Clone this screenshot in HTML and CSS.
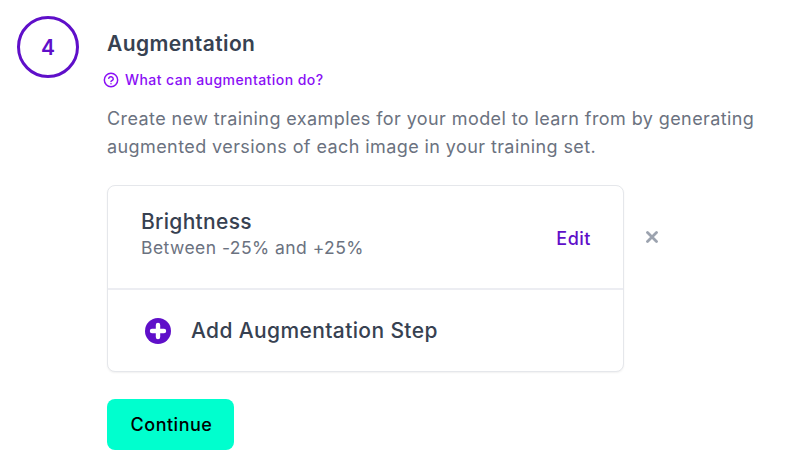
FILE: index.html
```html
<!DOCTYPE html>
<html lang="en">
<head>
<meta charset="utf-8">
<title>Augmentation</title>
<link rel="stylesheet" href="styles.css">
</head>
<body>
<div class="step">
  <div class="badge">4</div>
  <div class="content">
    <h2 class="title">Augmentation</h2>
    <a class="help">
      <svg class="help-icon" viewBox="0 0 24 24" fill="none" stroke="currentColor" stroke-width="2.2" stroke-linecap="round" stroke-linejoin="round"><circle cx="12" cy="12" r="10"/><path d="M8.6 9.4a3.5 3.5 0 0 1 6.8 1c0 2.2-3.4 2.6-3.4 4"/><path d="M12 17.6v.1"/></svg>
      <span>What can augmentation do?</span>
    </a>
    <p class="desc">Create new training examples for your model to learn from by generating augmented versions of each image in your training set.</p>
    <div class="card-row">
      <div class="card">
        <div class="row row-item">
          <div class="item-text">
            <div class="item-name">Brightness</div>
            <div class="item-sub">Between -25% and +25%</div>
          </div>
          <a class="edit">Edit</a>
        </div>
        <div class="row row-add">
          <svg class="plus" viewBox="0 0 26 26"><circle cx="13" cy="13" r="13" fill="#5f0fc9"/><path d="M13 7v12M7 13h12" stroke="#fff" stroke-width="4.4" stroke-linecap="round"/></svg>
          <span class="add-label">Add Augmentation Step</span>
        </div>
      </div>
      <svg class="close" viewBox="0 0 12 12"><path d="M1.5 1.5l9 9M10.5 1.5l-9 9" stroke="#9ca3af" stroke-width="2.8" stroke-linecap="round"/></svg>
    </div>
    <button class="continue">Continue</button>
  </div>
</div>
</body>
</html>
```
FILE: styles.css
```css
* { box-sizing: border-box; }
html, body { margin: 0; padding: 0; background: #fff; }
body { width: 800px; height: 473px; overflow: hidden; font-family: Inter, "Liberation Sans", sans-serif; }
.step { display: flex; align-items: flex-start; padding: 16px 0 0 17px; }
.badge {
  width: 62px; height: 62px; flex: none; border: 3px solid #5f0fc9; border-radius: 50%;
  display: flex; align-items: center; justify-content: center;
  color: #5f0fc9; font-size: 21px; font-weight: 600;
}
.content { margin-left: 28px; width: 665px; }
.title { margin: 14px 0 0; font-size: 21px; line-height: 28px; font-weight: 600; letter-spacing: .4px; color: #374151; }
.help { display: flex; align-items: center; margin: 12px 0 0 -4px; color: #8a0ff5; font-size: 14px; line-height: 20px; font-weight: 500; letter-spacing: .44px; }
.help-icon { width: 16px; height: 16px; margin-right: 6px; flex: none; }
.desc { margin: 15px 0 0; font-size: 18px; line-height: 28px; letter-spacing: .41px; color: #6b7280; }
.card-row { display: flex; align-items: flex-start; margin-top: 24px; }
.card { width: 517px; border: 1px solid #e5e7eb; border-radius: 8px; box-shadow: 0 1px 2px rgba(0,0,0,.06); background: #fff; }
.row { display: flex; align-items: center; }
.row-item { height: 104px; padding: 0 32px 6px 33px; justify-content: space-between; border-bottom: 2px solid #ecedf2; }
.item-name { font-size: 21px; line-height: 28px; font-weight: 500; letter-spacing: .3px; color: #374151; }
.item-sub { font-size: 17.5px; line-height: 24px; letter-spacing: .45px; color: #6b7280; }
.edit { font-size: 18px; font-weight: 500; letter-spacing: .5px; color: #5f0fc9; position: relative; top: 4px; }
.row-add { height: 81px; padding: 0 37px; }
.plus { width: 26px; height: 26px; flex: none; margin-right: 20px; }
.add-label { font-size: 21px; font-weight: 500; letter-spacing: .38px; color: #374151; }
.close { width: 12px; height: 12px; margin: 46px 0 0 22px; flex: none; }
.continue {
  display: block; margin-top: 27px; width: 127px; height: 51px; padding: 0 0 0 2px; border: 0; border-radius: 8px;
  background: #00ffce; color: #000; font: 500 18px Inter, "Liberation Sans", sans-serif; letter-spacing: .5px;
}
```
